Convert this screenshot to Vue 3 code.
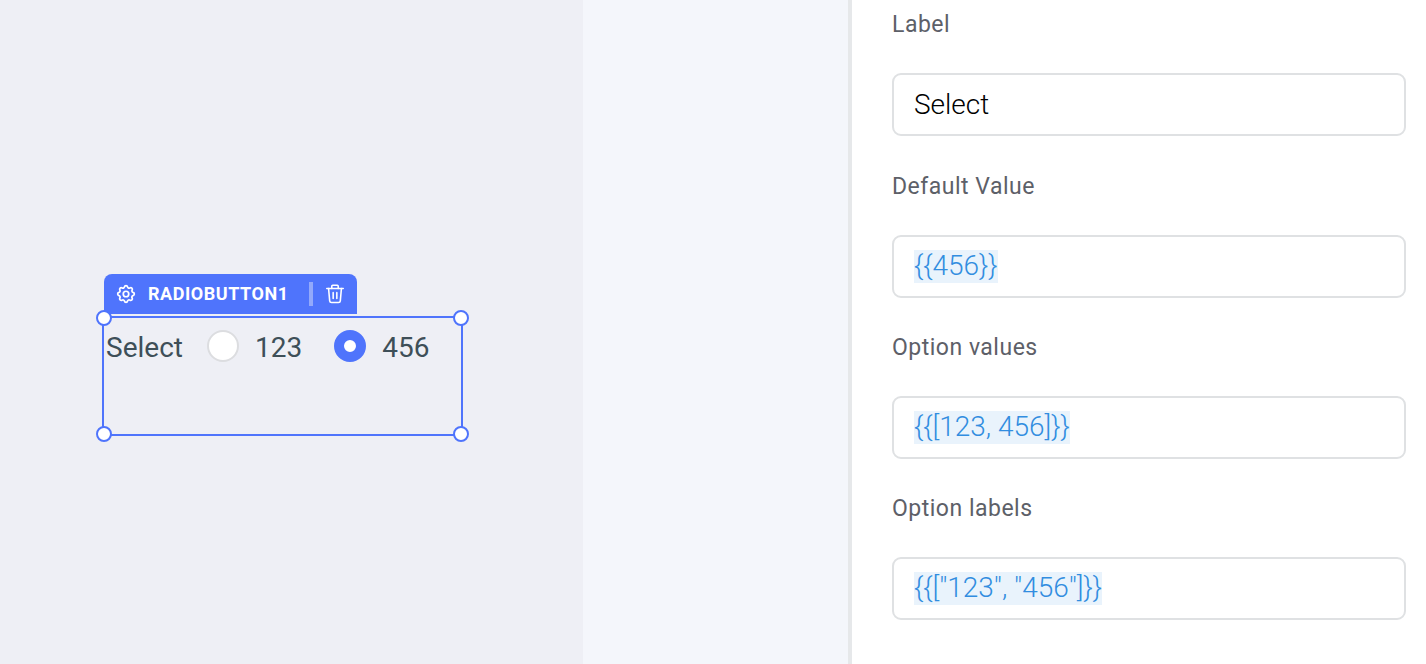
<template>
  <div class="page">
    <div class="canvas">
      <div class="widget">
        <div class="toolbar">
          <svg class="gear" viewBox="0 0 24 24" fill="none" stroke="#fff" stroke-width="1.9" stroke-linecap="round" stroke-linejoin="round">
            <path d="M10.3 4.3c.4-1.8 3-1.8 3.4 0a1.7 1.7 0 0 0 2.6 1.1c1.5-.9 3.3.8 2.4 2.4a1.7 1.7 0 0 0 1 2.5c1.8.4 1.8 3 0 3.4a1.7 1.7 0 0 0-1 2.6c.9 1.5-.9 3.3-2.4 2.4a1.7 1.7 0 0 0-2.6 1c-.4 1.8-3 1.8-3.4 0a1.7 1.7 0 0 0-2.6-1c-1.5.9-3.3-.9-2.4-2.4a1.7 1.7 0 0 0-1-2.6c-1.8-.4-1.8-3 0-3.4a1.7 1.7 0 0 0 1-2.5c-.9-1.6.9-3.3 2.4-2.4a1.7 1.7 0 0 0 2.6-1.1z" />
            <circle cx="12" cy="12" r="3" />
          </svg>
          <span class="widget-name">RADIOBUTTON1</span>
          <span class="divider"></span>
          <svg class="trash" viewBox="0 0 24 24" fill="none" stroke="#fff" stroke-width="1.7" stroke-linecap="round" stroke-linejoin="round">
            <path d="M3 6h18" />
            <path d="M8.5 6V3.5a1 1 0 0 1 1-1h5a1 1 0 0 1 1 1V6" />
            <path d="M5 6l1.2 13.5a2 2 0 0 0 2 1.8h7.6a2 2 0 0 0 2-1.8L19 6" />
            <path d="M10 10.5v6.5M14 10.5v6.5" />
          </svg>
        </div>
        <div class="selection">
          <span v-for="h in handles" :key="h" class="handle" :class="h"></span>
          <div class="radio-row">
            <span class="radio-text">Select</span>
            <span class="radio"></span>
            <span class="radio-text option">123</span>
            <span class="radio checked"></span>
            <span class="radio-text option">456</span>
          </div>
        </div>
      </div>
    </div>
    <div class="gutter"></div>
    <div class="panel">
      <div v-for="field in fields" :key="field.label" class="field">
        <div class="field-label">{{ field.label }}</div>
        <div class="field-input">
          <span :class="{ binding: field.binding }">{{ field.value }}</span>
        </div>
      </div>
    </div>
  </div>
</template>

<script setup>
const handles = ["tl", "tr", "bl", "br"];

const fields = [
  { label: "Label", value: "Select", binding: false },
  { label: "Default Value", value: "{{456}}", binding: true },
  { label: "Option values", value: "{{[123, 456]}}", binding: true },
  { label: "Option labels", value: '{{["123", "456"]}}', binding: true },
];
</script>

<style>
html,
body {
  margin: 0;
  overflow: hidden;
}
</style>

<style scoped>
.page {
  display: flex;
  width: 1426px;
  height: 664px;
  overflow: hidden;
  font-family: Roboto, "Liberation Sans", sans-serif;
}

.canvas {
  position: relative;
  width: 583px;
  background-color: #eeeff5;
}

.gutter {
  width: 265px;
  background-color: #f4f6fb;
}

.panel {
  flex: 1;
  box-sizing: border-box;
  padding: 8.4px 20px 0 40px;
  background-color: #fff;
  border-left: 4px solid #e6e8ea;
}

.field {
  margin-bottom: 33.3px;
}

.field-label {
  height: 30px;
  margin-bottom: 35px;
  font-size: 23px;
  line-height: 33px;
  letter-spacing: 0.5px;
  color: #5d6068;
}

.field-input {
  box-sizing: border-box;
  height: 63px;
  padding-left: 20px;
  border: 2px solid #dfe1e3;
  border-radius: 9px;
  font-size: 28px;
  font-weight: 300;
  line-height: 59px;
  color: #000;
}

.binding {
  display: inline-block;
  height: 33px;
  line-height: 32px;
  vertical-align: 1px;
  color: #318de0;
  background-color: #e9f3fc;
}

.widget {
  position: absolute;
  left: 102px;
  top: 274px;
  width: 361px;
}

.toolbar {
  display: flex;
  align-items: center;
  box-sizing: border-box;
  width: 253px;
  height: 40px;
  margin-left: 2px;
  padding-left: 11px;
  background-color: #4f74fc;
  border-radius: 8px 8px 0 0;
  color: #fff;
}

.gear {
  width: 22px;
  height: 22px;
}

.widget-name {
  margin-left: 11px;
  margin-bottom: 1px;
  font-size: 18px;
  font-weight: 700;
  letter-spacing: 0.55px;
}

.divider {
  width: 4px;
  height: 24px;
  margin-left: 20px;
  background-color: #93a9fb;
}

.trash {
  width: 22px;
  height: 22px;
  margin-left: 11px;
}

.selection {
  position: relative;
  box-sizing: border-box;
  height: 120px;
  margin-top: 2px;
  border: 2px solid #4f74fc;
}

.handle {
  position: absolute;
  box-sizing: border-box;
  width: 16px;
  height: 16px;
  background-color: #fff;
  border: 2px solid #4f74fc;
  border-radius: 50%;
}

.tl {
  left: -8px;
  top: -8px;
}

.tr {
  right: -8px;
  top: -8px;
}

.bl {
  left: -8px;
  bottom: -8px;
}

.br {
  right: -8px;
  bottom: -8px;
}

.radio-row {
  display: flex;
  align-items: center;
  height: 32px;
  margin-top: 12px;
  padding-left: 2px;
  font-size: 28px;
  color: #3e4f58;
}

.radio-text {
  padding-top: 2px;
}

.radio {
  box-sizing: border-box;
  width: 32px;
  height: 32px;
  margin-left: 24px;
  background-color: #fff;
  border: 2px solid #dcdde0;
  border-radius: 50%;
}

.radio.checked {
  margin-left: 32px;
  border: 10px solid #4f74fc;
}

.option {
  margin-left: 16px;
}
</style>
